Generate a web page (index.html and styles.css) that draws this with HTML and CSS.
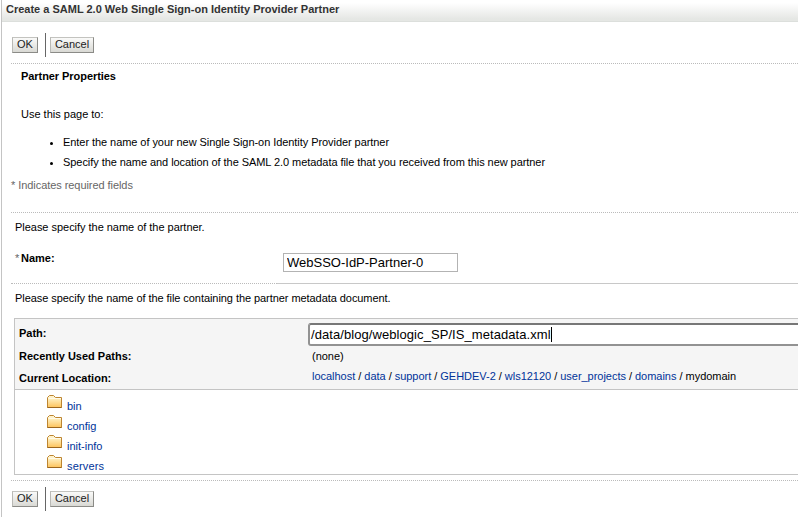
FILE: index.html
```html
<!DOCTYPE html>
<html lang="en">
<head>
<meta charset="utf-8">
<title>Create a SAML 2.0 Web Single Sign-on Identity Provider Partner</title>
<link rel="stylesheet" href="styles.css">
</head>
<body>
<svg class="defs" width="0" height="0" aria-hidden="true">
  <defs>
    <linearGradient id="paper" x1="0" y1="0" x2="0" y2="1">
      <stop offset="0" stop-color="#fff6d6"/>
      <stop offset="0.35" stop-color="#feeab4"/>
      <stop offset="1" stop-color="#fdc35c"/>
    </linearGradient>
    <symbol id="folder" viewBox="0 0 16 14">
      <path d="M.5 12.5V2.5L2.5.5H6.5L8.5 2.5H14.5V12.5Z" fill="url(#paper)" stroke="#bd8530"/>
      <path d="M1.5 3.5H14" stroke="#fffbea"/>
      <path d="M.5 12.5H14.5" stroke="#9c661c"/>
    </symbol>
  </defs>
</svg>
<main class="page">
  <h1 class="title">Create a SAML 2.0 Web Single Sign-on Identity Provider Partner</h1>
  <div class="toolbar">
    <button class="btn ok">OK</button><span class="sep"></span><button class="btn cancel">Cancel</button>
  </div>
  <section class="intro">
    <h2>Partner Properties</h2>
    <p>Use this page to:</p>
    <ul>
      <li>Enter the name of your new Single Sign-on Identity Provider partner</li>
      <li>Specify the name and location of the SAML 2.0 metadata file that you received from this new partner</li>
    </ul>
    <div class="required">* Indicates required fields</div>
  </section>
  <section class="partner">
    <p>Please specify the name of the partner.</p>
    <div class="field">
      <label for="name"><span class="star">*</span>Name:</label>
      <input id="name" class="name-input" type="text" value="WebSSO-IdP-Partner-0">
    </div>
  </section>
  <div class="rule"><span class="dots"></span><span class="solid"></span></div>
  <section class="file">
    <p>Please specify the name of the file containing the partner metadata document.</p>
    <div class="browser">
      <div class="location">
        <b>Path:</b><div class="path"><span>/data/blog/weblogic_SP/IS_metadata.xml</span><i class="caret"></i></div>
        <b>Recently Used Paths:</b><span class="value">(none)</span>
        <b>Current Location:</b><span class="value crumbs"><a>localhost</a> / <a>data</a> / <a>support</a> / <a>GEHDEV-2</a> / <a>wls12120</a> / <a>user_projects</a> / <a>domains</a> / mydomain</span>
      </div>
      <div class="folders">
        <div class="folder"><svg width="16" height="14"><use href="#folder"/></svg><a>bin</a></div>
        <div class="folder"><svg width="16" height="14"><use href="#folder"/></svg><a>config</a></div>
        <div class="folder"><svg width="16" height="14"><use href="#folder"/></svg><a>init-info</a></div>
        <div class="folder"><svg width="16" height="14"><use href="#folder"/></svg><a class="wide">servers</a></div>
      </div>
    </div>
  </section>
  <div class="toolbar bottom">
    <button class="btn ok">OK</button><span class="sep"></span><button class="btn cancel">Cancel</button>
  </div>
</main>
</body>
</html>
```
FILE: styles.css
```css
* { box-sizing: border-box; }
body {
  margin: 0;
  background: #fff;
  color: #000;
  font: 11px/14px "Liberation Sans", Arial, sans-serif;
  overflow: hidden;
}
h1, h2, p, ul { margin: 0; padding: 0; font-size: 11px; }
a { color: #003399; }
.defs { display: block; }
.page {
  margin-left: 1px;
  border-left: 1px solid #c4c4c4;
  height: 517px;
  overflow: hidden;
}
.title {
  height: 22px;
  padding: 2px 0 0 4px;
  color: #333;
  background: linear-gradient(#fff 3px, #e5e7e4 19px);
  border-bottom: 1px solid #dcdfdc;
}
.toolbar {
  display: flex;
  align-items: flex-start;
  height: 41px;
  padding: 5px 0 1px 10px;
}
.toolbar .sep {
  width: 1px;
  height: 24px;
  margin: 6px 4px 0 7px;
  background: #666;
}
.btn {
  height: 16px;
  margin-top: 10px;
  padding: 0 0 1px;
  font: 11px/13px "Liberation Sans", Arial, sans-serif;
  color: #222;
  background: linear-gradient(#fafaf9, #d9d9d4);
  border: 1px solid;
  border-color: #c3c3bf #8b8b87 #8b8b87 #b9b9b5;
  border-radius: 0;
}
.ok { width: 26px; }
.cancel { width: 44px; }
.intro {
  margin-left: 9px;
  height: 149px;
  border-top: 1px dotted #bbb;
  padding-top: 5px;
}
.intro, .file p { letter-spacing: -0.062px; }
.intro h2, .intro p { margin-left: 10px; }
.intro p { margin-top: 24px; letter-spacing: 0; }
.intro ul { margin-top: 11px; padding-left: 52px; line-height: 20px; }
.required { margin-top: 6px; color: #666; }
.partner {
  margin-left: 9px;
  height: 71px;
  border-top: 1px dotted #bbb;
  padding: 7px 0 0 4px;
}
.partner p { letter-spacing: -0.03px; }
.field { display: flex; margin-top: 17px; }
.field label { width: 268px; font-weight: bold; }
.star { display: inline-block; width: 6px; color: #666; font-weight: normal; }
.name-input {
  width: 175px;
  height: 19px;
  margin-top: 2px;
  padding: 0 3px;
  border: 1px solid #b3b3b3;
  background: #fff;
  color: #000;
  font: 13px "Liberation Sans", Arial, sans-serif;
}
.rule { display: flex; height: 1px; margin-left: 9px; }
.dots { width: 266px; border-top: 1px dotted #bbb; }
.solid { flex: 1; background: #c8c8c8; }
.file { padding: 7px 0 0 12px; }
.file p { margin-left: 1px; }
.browser {
  height: 157px;
  margin-top: 13px;
  border: 1px solid #c4c4c4;
  border-right: 0;
}
.location {
  display: grid;
  grid-template-columns: 293px 1fr;
  grid-template-rows: 27px 22px 22px;
  height: 71px;
  background: #f5f5f5;
  border-bottom: 1px solid #c4c4c4;
}
.location b { padding: 3px 0 0 4px; }
.location b:first-child { padding-top: 7px; }
.value { padding: 3px 0 0 4px; white-space: nowrap; letter-spacing: -0.025px; }
.crumbs { padding-top: 1px; }
.path {
  display: flex;
  align-items: center;
  height: 23px;
  margin: 4px -6px 0 0;
  padding-left: 1px;
  border: 2px solid #929292;
  border-top-color: #777;
  border-radius: 3px;
  background: #fff;
  font-size: 13px;
  letter-spacing: 0.07px;
}
.caret { width: 1px; height: 15px; background: #000; }
.folders { padding: 5px 0 0 32px; }
.folder { display: flex; height: 20px; }
.folder a { margin: 4px 0 0 4px; }
.folder .wide { letter-spacing: 0.17px; }
.folder svg { display: block; }
.bottom { margin: 5px 0 0 9px; padding: 0 0 0 1px; border-top: 1px dotted #bbb; }
```
